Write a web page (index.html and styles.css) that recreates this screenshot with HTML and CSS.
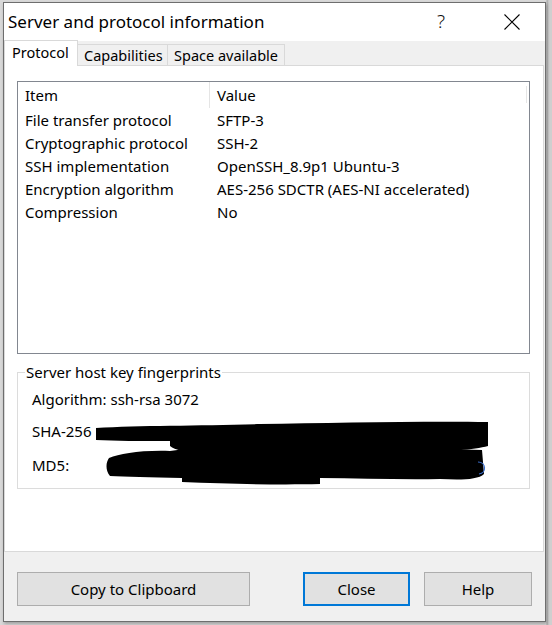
FILE: index.html
```html
<!DOCTYPE html>
<html>
<head>
<meta charset="utf-8">
<link rel="stylesheet" href="styles.css">
</head>
<body>
<div class="window">
  <div class="titlebar">
    <span class="title">Server and protocol information</span>
    <span class="help-q">?</span>
    <svg class="close-x" width="16" height="16" viewBox="0 0 16 16"><path d="M0.5 0.5 L15.5 15.5 M15.5 0.5 L0.5 15.5" stroke="#000" stroke-width="1.1" fill="none"/></svg>
  </div>
  <div class="client">
    <div class="tabs">
      <div class="tab active">Protocol</div>
      <div class="tab">Capabilities</div>
      <div class="tab">Space available</div>
    </div>
    <div class="panel">
      <div class="listview">
        <div class="lv-header">
          <div class="col col1">Item</div>
          <div class="col col2">Value</div>
        </div>
        <div class="lv-row"><div class="col col1">File transfer protocol</div><div class="col col2">SFTP-3</div></div>
        <div class="lv-row"><div class="col col1">Cryptographic protocol</div><div class="col col2">SSH-2</div></div>
        <div class="lv-row"><div class="col col1">SSH implementation</div><div class="col col2">OpenSSH_8.9p1 Ubuntu-3</div></div>
        <div class="lv-row"><div class="col col1">Encryption algorithm</div><div class="col col2">AES-256 SDCTR (AES-NI accelerated)</div></div>
        <div class="lv-row"><div class="col col1">Compression</div><div class="col col2">No</div></div>
      </div>
      <div class="groupbox">
        <div class="gb-label">Server host key fingerprints</div>
        <div class="gb-line gb-alg">Algorithm: ssh-rsa 3072</div>
        <div class="gb-line gb-sha">SHA-256</div>
        <div class="gb-line gb-md5">MD5:</div>
      </div>
    </div>
    <div class="buttons">
      <div class="btn btn-copy">Copy to Clipboard</div>
      <div class="btn-right">
        <div class="btn btn-close">Close</div>
        <div class="btn btn-help">Help</div>
      </div>
    </div>
  </div>
</div>
<svg class="redact" width="552" height="625" viewBox="0 0 552 625">
  <path d="M96 428 C140 425 200 426 260 424 C330 423 420 421 488 422 L488 446 C470 451 430 452 400 451 C340 450 300 451 250 449 C230 451 215 456 200 453 C185 452 175 450 170 446 L170 441 C140 441 115 441 96 440 Z" fill="#000"/>
  <path d="M109 458 C120 454 140 450 170 451 C200 447 260 446 330 448 C380 449 440 448 482 450 L484 474 C478 480 460 480 440 479 C400 480 360 478 320 478 L320 484 C280 485 230 484 182 482 L182 478 C150 477 125 477 110 476 C105 470 106 462 109 458 Z" fill="#000"/>
  <path d="M478 462 C486 462 487 473 479 474" fill="none" stroke="#3a6fd0" stroke-width="1.2"/>
</svg>
</body>
</html>
```
FILE: styles.css
```css
html, body {
  margin: 0;
  padding: 0;
}
body {
  width: 552px;
  height: 625px;
  background: linear-gradient(to right, #d8d8d8 0, #d8d8d8 546px, #a9a9a9 547px, #cfcfcf 549px);
  font-family: "Noto Sans", "Open Sans", sans-serif;
  color: #000;
  overflow: hidden;
  position: relative;
}
.window {
  position: absolute;
  left: 3px;
  top: 2px;
  width: 543px;
  height: 620px;
  box-sizing: border-box;
  border: 1px solid #6e6e6e;
  background: #f0f0f0;
  display: flex;
  flex-direction: column;
  box-shadow: 1px 2px 3px rgba(0,0,0,0.25);
}
.titlebar {
  height: 38px;
  background: #fff;
  display: flex;
  align-items: center;
  flex: none;
}
.title {
  font-size: 17px;
  padding-left: 4px;
  margin-top: -1px;
  flex: 1;
}
.help-q {
  font-size: 19px;
  width: 14px;
  margin-right: 53px;
  font-weight: 300;
  color: #111;
  margin-top: -2px;
}
.close-x {
  margin-right: 25px;
  flex: none;
}
.client {
  flex: 1;
  display: flex;
  flex-direction: column;
}
.tabs {
  height: 24px;
  display: flex;
  align-items: flex-end;
  position: relative;
  z-index: 2;
  flex: none;
  font-size: 14.5px;
}
.tab {
  box-sizing: border-box;
  height: 21px;
  border: 1px solid #d9d9d9;
  border-bottom: none;
  background: #f0f0f0;
  display: flex;
  align-items: center;
  padding: 0 6px 1px 6px;
  margin-bottom: 0;
}
.tab.active {
  height: 26px;
  margin-bottom: -1px;
  background: #fff;
  padding: 0 7px 3px 7px;
  width: 74px;
  margin-right: -1px;
}
.tab:nth-child(2) { width: 91px; }
.tab:nth-child(3) { width: 118px; margin-left: -1px; }
.panel {
  box-sizing: border-box;
  width: 540px;
  height: 487px;
  background: #fff;
  border: 1px solid #d9d9d9;
  padding: 15px 13px 0 12px;
  flex: none;
  font-size: 15px;
}
.listview {
  box-sizing: border-box;
  height: 273px;
  border: 1px solid #828790;
  background: #fff;
}
.lv-header {
  display: flex;
  height: 26px;
  align-items: center;
  position: relative;
}
.lv-header .col1 {
  border-right: 1px solid #e5e5e5;
  height: 26px;
}
.lv-header::after {
  content: "";
  position: absolute;
  right: 2px;
  top: 4px;
  height: 17px;
  border-right: 1px solid #e5e5e5;
}
.lv-row {
  display: flex;
  height: 23px;
  align-items: center;
}
.col {
  display: flex;
  align-items: center;
  box-sizing: border-box;
  white-space: nowrap;
}
.col1 {
  width: 192px;
  padding-left: 7px;
}
.col2 {
  padding-left: 7px;
}
.groupbox {
  box-sizing: border-box;
  margin-top: 18px;
  height: 117px;
  border: 1px solid #dcdcdc;
  position: relative;
  padding-left: 14px;
}
.gb-label {
  position: absolute;
  left: 7px;
  top: -11px;
  background: #fff;
  padding: 0 1px;
  line-height: 20px;
}
.gb-line {
  position: relative;
  line-height: 20px;
}
.gb-alg { margin-top: 16px; }
.gb-sha { margin-top: 12px; }
.gb-md5 { margin-top: 14px; }
.buttons {
  display: flex;
  justify-content: space-between;
  padding: 20px 13px 0 13px;
  font-size: 15px;
}
.btn-right {
  display: flex;
  gap: 14px;
}
.btn {
  box-sizing: border-box;
  height: 34px;
  background: #e1e1e1;
  border: 1px solid #adadad;
  display: flex;
  align-items: center;
  justify-content: center;
}
.btn-copy { width: 233px; }
.btn-close { width: 107px; border: 2px solid #0078d7; }
.btn-help { width: 108px; }
.redact {
  position: absolute;
  left: 0;
  top: 0;
  pointer-events: none;
}
```
